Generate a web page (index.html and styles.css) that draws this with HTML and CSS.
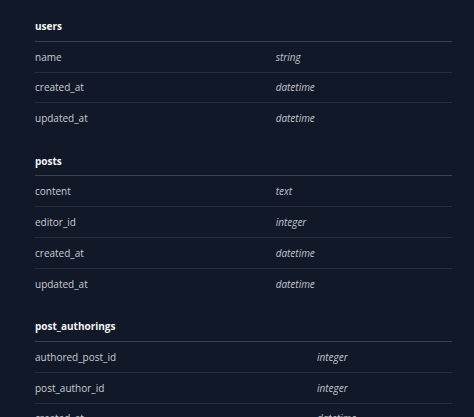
FILE: index.html
```html
<!DOCTYPE html>
<html>
<head>
<meta charset="utf-8">
<link rel="stylesheet" href="styles.css">
</head>
<body>
<main class="schema">
  <table class="model">
    <thead><tr><th colspan="2">users</th></tr></thead>
    <tbody>
      <tr><td class="col">name</td><td class="type">string</td></tr>
      <tr><td class="col">created_at</td><td class="type">datetime</td></tr>
      <tr><td class="col">updated_at</td><td class="type">datetime</td></tr>
    </tbody>
  </table>
  <table class="model">
    <thead><tr><th colspan="2">posts</th></tr></thead>
    <tbody>
      <tr><td class="col">content</td><td class="type">text</td></tr>
      <tr><td class="col">editor_id</td><td class="type">integer</td></tr>
      <tr><td class="col">created_at</td><td class="type">datetime</td></tr>
      <tr><td class="col">updated_at</td><td class="type">datetime</td></tr>
    </tbody>
  </table>
  <table class="model">
    <thead><tr><th colspan="2">post_authorings</th></tr></thead>
    <tbody>
      <tr><td class="col">authored_post_id</td><td class="type">integer</td></tr>
      <tr><td class="col">post_author_id</td><td class="type">integer</td></tr>
      <tr><td class="col">created_at</td><td class="type">datetime</td></tr>
      <tr><td class="col">updated_at</td><td class="type">datetime</td></tr>
    </tbody>
  </table>
</main>
</body>
</html>
```
FILE: styles.css
```css
html, body {
  margin: 0;
  padding: 0;
  background: #111827;
  height: 100%;
  overflow: hidden;
}
body {
  font-family: "Open Sans", "Noto Sans", sans-serif;
  font-size: 10px;
}
.schema {
  display: flex;
  flex-direction: column;
  gap: 12.5px;
  padding: 11px 0 0 35px;
  width: 417px;
}
.model {
  width: 417px;
  border-collapse: collapse;
  border-spacing: 0;
}
.model th {
  text-align: left;
  font-weight: 700;
  color: #f3f4f6;
  height: 29.8px;
  padding: 0;
  border-bottom: 1px solid #3a4252;
}
.model td {
  height: 29.8px;
  padding: 0;
  border-bottom: 1px solid #262e3c;
  vertical-align: middle;
}
.model tbody tr:last-child td {
  border-bottom: none;
}
.col {
  color: #c9cdd4;
  padding-right: 0.8px !important;
}
.type {
  color: #c2c6ce;
  font-style: italic;
}
```
